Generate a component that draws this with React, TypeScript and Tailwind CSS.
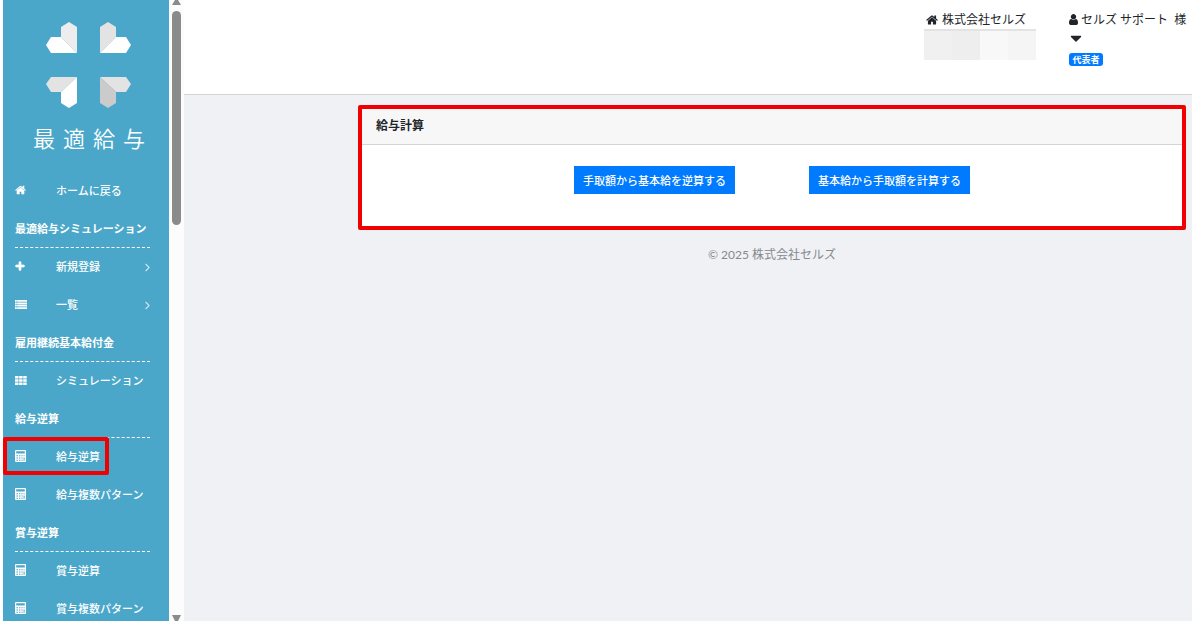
import type { ReactNode } from 'react';
import { FaCaretDown, FaPlus } from 'react-icons/fa';
import { FiChevronRight } from 'react-icons/fi';

type MenuEntry = {
  type: 'heading' | 'link';
  label: string;
  icon?: ReactNode;
  hasChildren?: boolean;
  highlighted?: boolean;
};

function HomeIcon({ className }: { className?: string }) {
  return (
    <svg viewBox="64 192 1664 1408" fill="currentColor" className={className} aria-hidden="true">
      <path d="M1472 992v480q0 26-19 45t-45 19h-384v-384h-256v384h-384q-26 0-45-19t-19-45v-480q0-1 .5-3t.5-3l575-474 575 474q1 2 1 6zm223-69l-62 74q-8 9-21 11h-3q-13 0-21-7l-692-577-692 577q-12 8-24 7-13-2-21-11l-62-74q-8-10-7-23.5t11-21.5l719-599q32-26 76-26t76 26l244 204v-195q0-14 9-23t23-9h192q14 0 23 9t9 23v408l219 182q10 8 11 21.5t-7 23.5z" />
    </svg>
  );
}

function UserIcon() {
  return (
    <svg viewBox="256 128 1280 1536" fill="currentColor" className="h-[11px] w-[9px] shrink-0" aria-hidden="true">
      <path d="M1536 1399q0 109-62.5 187t-150.5 78h-854q-88 0-150.5-78t-62.5-187q0-85 8.5-160.5t31.5-152 58.5-131 94-89 134.5-34.5q131 128 313 128t313-128q76 0 134.5 34.5t94 89 58.5 131 31.5 152 8.5 160.5zm-256-887q0 159-112.5 271.5t-271.5 112.5-271.5-112.5-112.5-271.5 112.5-271.5 271.5-112.5 271.5 112.5 112.5 271.5z" />
    </svg>
  );
}

function ListIcon() {
  return (
    <svg viewBox="0 0 12 9" fill="currentColor" className="h-[9px] w-3" aria-hidden="true">
      <path d="M0 0h1.8v1.8H0zM2.2 0H12v1.8H2.2zM0 2.4h1.8v1.8H0zM2.2 2.4H12v1.8H2.2zM0 4.8h1.8v1.8H0zM2.2 4.8H12v1.8H2.2zM0 7.2h1.8V9H0zM2.2 7.2H12V9H2.2z" />
    </svg>
  );
}

function GridIcon() {
  return (
    <svg viewBox="0 0 12 9" fill="currentColor" className="h-[9px] w-3" aria-hidden="true">
      <path d="M0 0h3.5v2.6H0zM4.1 0h3.5v2.6H4.1zM8.2 0h3.5v2.6H8.2zM0 3.2h3.5v2.6H0zM4.1 3.2h3.5v2.6H4.1zM8.2 3.2h3.5v2.6H8.2zM0 6.4h3.5V9H0zM4.1 6.4h3.5V9H4.1zM8.2 6.4h3.5V9H8.2z" />
    </svg>
  );
}

function CalculatorIcon() {
  return (
    <svg viewBox="0 0 11 12" fill="currentColor" className="h-3 w-[11px]" aria-hidden="true">
      <path
        fillRule="evenodd"
        d="M1 0h9a1 1 0 0 1 1 1v10a1 1 0 0 1-1 1H1a1 1 0 0 1-1-1V1a1 1 0 0 1 1-1zM1.2 1.2v2.4h8.6V1.2zM1.4 5.2v1H3v-1zM4 5.2v1h1.4v-1zM6.4 5.2v1h1.2v-1zM8.6 5.2v1h1v-1zM1.4 7.4v1H3v-1zM4 7.4v1h1.4v-1zM6.4 7.4v1h1.2v-1zM8.6 7.4v3.3h1V7.4zM1.4 9.7v1H3v-1zM4 9.7v1h1.4v-1zM6.4 9.7v1h1.2v-1z"
      />
    </svg>
  );
}

const menu: MenuEntry[] = [
  { type: 'link', label: 'ホームに戻る', icon: <HomeIcon className="h-[10px] w-[11px]" /> },
  { type: 'heading', label: '最適給与シミュレーション' },
  { type: 'link', label: '新規登録', icon: <FaPlus size={10} stroke="currentColor" strokeWidth={40} />, hasChildren: true },
  { type: 'link', label: '一覧', icon: <ListIcon />, hasChildren: true },
  { type: 'heading', label: '雇用継続基本給付金' },
  { type: 'link', label: 'シミュレーション', icon: <GridIcon /> },
  { type: 'heading', label: '給与逆算' },
  { type: 'link', label: '給与逆算', icon: <CalculatorIcon />, highlighted: true },
  { type: 'link', label: '給与複数パターン', icon: <CalculatorIcon /> },
  { type: 'heading', label: '賞与逆算' },
  { type: 'link', label: '賞与逆算', icon: <CalculatorIcon /> },
  { type: 'link', label: '賞与複数パターン', icon: <CalculatorIcon /> },
];

function Logo() {
  return (
    <div className="flex h-[172px] flex-col items-center pt-[22px] pl-[6px]">
      <svg viewBox="0 0 86 86" className="h-[86px] w-[86px]" aria-hidden="true">
        <path fill="#ededed" d="M15 15V5l8-5 8 5v26z" />
        <path fill="#fff" d="M15 15H5l-5 8 5 8h26z" />
        <path fill="#e3e3e3" d="M70 15V5l-8-5-8 5v26z" />
        <path fill="#fff" d="M70 15h10l5 8-5 8H54z" />
        <path fill="#e3e3e3" d="M15 70H5l-5-8 5-7h26z" />
        <path fill="#fff" d="M15 70v11l8 5 8-5V55z" />
        <path fill="#e3e3e3" d="M70 70h10l5-8-5-7H54z" />
        <path fill="#cbcbcb" d="M70 70v11l-8 5-8-5V55z" />
      </svg>
      <div className="mt-[15px] flex gap-2 text-[22px] leading-8 font-[350]">
        <span>最</span>
        <span>適</span>
        <span>給</span>
        <span>与</span>
      </div>
    </div>
  );
}

function MenuRow({ entry }: { entry: MenuEntry }) {
  if (entry.type === 'heading') {
    return (
      <li className="flex h-[38px] items-center border-b border-dashed border-white font-bold">
        {entry.label}
      </li>
    );
  }

  return (
    <li className="relative">
      <a href="#" className="flex h-[38px] items-center font-medium">
        <span className="w-[41px] shrink-0 pb-[2px]">{entry.icon}</span>
        <span className="grow">{entry.label}</span>
        {entry.hasChildren && <FiChevronRight size={13} className="-mr-1 text-white/70" />}
      </a>
      {entry.highlighted && (
        <span className="pointer-events-none absolute -top-px bottom-px -left-3 w-[106px] rounded-xs border-4 border-[#f00000]" />
      )}
    </li>
  );
}

function Sidebar() {
  return (
    <aside className="w-[166px] shrink-0 overflow-hidden bg-[#4aa7c9] text-white">
      <Logo />
      <nav>
        <ul className="pr-[19px] pl-3 text-[11px] leading-4">
          {menu.map((entry) => (
            <MenuRow key={`${entry.type}-${entry.label}`} entry={entry} />
          ))}
        </ul>
      </nav>
    </aside>
  );
}

function ScrollTrack() {
  return (
    <div className="flex w-[15px] shrink-0 flex-col items-center bg-[#fcfcfc]" aria-hidden="true">
      <svg viewBox="0 0 9 5" className="h-[5px] w-[9px]" fill="#8b8b8b">
        <path d="M3 0h3l3 5H0z" />
      </svg>
      <div className="mt-[6px] h-[214px] w-[9px] rounded-full bg-[#8b8b8b]" />
      <svg viewBox="0 0 9 6" className="mt-auto h-[6px] w-[9px]" fill="#8b8b8b">
        <path d="M0 0h9L6 6H3z" />
      </svg>
    </div>
  );
}

function Header() {
  return (
    <header className="flex h-[95px] shrink-0 justify-end border-b border-[#d3d4d6] bg-white pt-[10px] pr-1 text-[12px] leading-[19px] text-[#212529]">
      <div className="w-[145px]">
        <div className="flex items-center gap-1 pl-[2px]">
          <HomeIcon className="h-[10px] w-[12px]" />
          <span>株式会社セルズ</span>
        </div>
        <div className="flex h-[31px] w-[112px] border-t-2 border-[#e3e3e3]">
          <span className="w-7 bg-[#f0f0f0]" />
          <span className="w-7 bg-[#eeeeee]" />
          <span className="w-7 bg-[#f8f8f8]" />
          <span className="w-7 bg-[#f5f5f5]" />
        </div>
      </div>
      <div className="w-[119px]">
        <button type="button" className="block text-left">
          <span className="flex items-center gap-[3px] whitespace-pre">
            <UserIcon />
            セルズ サポート  様
          </span>
          <FaCaretDown size={12} className="ml-px h-[18px]" />
        </button>
        <span className="mt-[6px] block w-[34px] rounded-[3px] bg-[#007bff] text-center text-[9px] leading-[13px] font-bold text-white">
          代表者
        </span>
      </div>
    </header>
  );
}

export default function App() {
  return (
    <div className="flex h-screen overflow-hidden bg-white pl-[3px] font-['Lato','Noto_Sans_CJK_JP',sans-serif]">
      <Sidebar />
      <ScrollTrack />
      <div className="flex min-w-0 grow flex-col bg-[#f0f1f5]">
        <Header />
        <main className="mt-[10px] mr-[6px] ml-[174px] rounded-xs border-4 border-[#f00000] bg-white">
          <h1 className="border-b border-[#d3d4d6] bg-[#f7f7f7] px-[14px] pt-[7px] pb-[9px] text-[12px] leading-[19px] font-bold text-[#212529]">
            給与計算
          </h1>
          <div className="flex justify-center gap-[74px] pt-[21px] pb-8">
            <button type="button" className="bg-[#007bff] px-[9px] pt-[7px] pb-[5px] text-[11px] leading-4 font-medium text-white">
              手取額から基本給を逆算する
            </button>
            <button type="button" className="bg-[#007bff] px-[9px] pt-[7px] pb-[5px] text-[11px] leading-4 font-medium text-white">
              基本給から手取額を計算する
            </button>
          </div>
        </main>
        <footer className="mt-[15px] mr-[6px] ml-[174px] text-center text-[12px] leading-[19px] text-[#868a8e]">
          © 2025 株式会社セルズ
        </footer>
      </div>
    </div>
  );
}
